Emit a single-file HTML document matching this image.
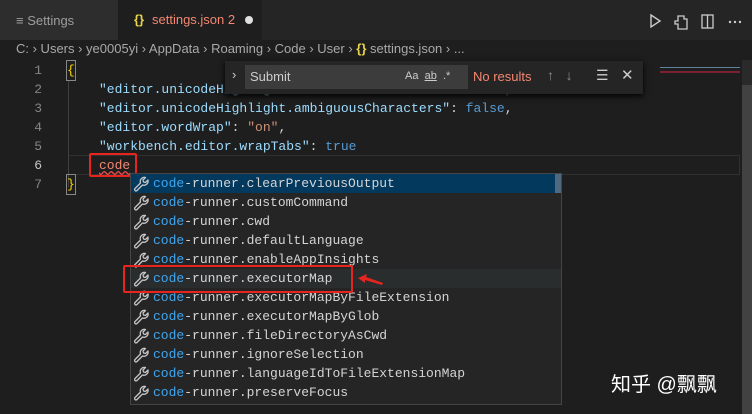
<!DOCTYPE html>
<html><head><meta charset="utf-8"><style>
*{margin:0;padding:0;box-sizing:border-box}
body{width:752px;height:414px;background:#1e1e1e;overflow:hidden;position:relative;font-family:"Liberation Sans","Noto Sans CJK SC",sans-serif;color:#ccc}
.abs{position:absolute}
.mono{font-family:"Liberation Mono",monospace;font-size:13px;white-space:pre}
.tabbar{left:0;top:0;width:752px;height:40px;background:#252526}
.ln{left:20px;width:22px;text-align:right;color:#858585}
.k{color:#9cdcfe}.s{color:#ce9178}.b{color:#569cd6}.p{color:#d4d4d4}
.row{position:absolute;left:0;width:430px;height:19px;line-height:19px}
.row .t{position:absolute;left:22px;color:#d4d4d4}
.row .t i{font-style:normal;color:#3ea6f0}
</style></head><body>
<div class="abs tabbar"></div>
<div class="abs" style="left:0;top:0;width:118px;height:40px;background:#2d2d2d"></div>
<div class="abs" style="left:16px;top:13px;font-size:13px;color:#9d9d9d">≡ Settings</div>
<div class="abs" style="left:118px;top:0;width:144px;height:40px;background:#1e1e1e"></div>
<div class="abs" style="left:134px;top:12px;font-size:13px;color:#e8d44d;font-weight:bold">{}</div>
<div class="abs" style="left:152px;top:12px;font-size:13px;color:#f48771">settings.json 2</div>
<div class="abs" style="left:245px;top:16px;width:8px;height:8px;border-radius:50%;background:#e0e0e0"></div>
<svg class="abs" style="left:640px;top:10px" width="110" height="22" viewBox="0 0 110 22">
<path d="M11 5 L20 11 L11 17 Z" fill="none" stroke="#ccc" stroke-width="1.4"/>
<path d="M38 6h6v3h3v10h-9v-5h-3v-3h3z" fill="none" stroke="#ccc" stroke-width="1.3"/>
<rect x="62" y="5" width="11" height="13" fill="none" stroke="#ccc" stroke-width="1.3"/><line x1="67.5" y1="5" x2="67.5" y2="18" stroke="#ccc" stroke-width="1.3"/>
<circle cx="90" cy="12" r="1.2" fill="#ccc"/><circle cx="95" cy="12" r="1.2" fill="#ccc"/><circle cx="100" cy="12" r="1.2" fill="#ccc"/>
</svg>
<div class="abs" style="left:16px;top:41px;font-size:13px;color:#a9a9a9;white-space:pre">C: › Users › ye0005yi › AppData › Roaming › Code › User › <b style="color:#e8d44d">{}</b> settings.json › ...</div>

<div class="abs" style="left:68px;top:155px;width:672px;height:20px;border:1px solid #303030"></div>
<div class="abs" style="left:68px;top:80px;width:1px;height:107px;background:#404040"></div>
<div class="abs mono" style="left:0;top:61px;line-height:19px">
<div class="abs ln" style="top:0">1</div><div class="abs ln" style="top:19px">2</div><div class="abs ln" style="top:38px">3</div><div class="abs ln" style="top:57px">4</div><div class="abs ln" style="top:76px">5</div><div class="abs ln" style="top:95px;color:#c6c6c6">6</div><div class="abs ln" style="top:114px">7</div>
<div class="abs" style="left:67px;top:0;color:#ffd700;outline:1px solid #888">{</div>
<div class="abs" style="left:99px;top:19px"><span class="k">"editor.unicodeHighlight.invisibleCharacters"</span><span class="p">: </span><span class="b">false</span><span class="p">,</span></div>
<div class="abs" style="left:99px;top:38px"><span class="k">"editor.unicodeHighlight.ambiguousCharacters"</span><span class="p">: </span><span class="b">false</span><span class="p">,</span></div>
<div class="abs" style="left:99px;top:57px"><span class="k">"editor.wordWrap"</span><span class="p">: </span><span class="s">"on"</span><span class="p">,</span></div>
<div class="abs" style="left:99px;top:76px"><span class="k">"workbench.editor.wrapTabs"</span><span class="p">: </span><span class="b">true</span></div>
<div class="abs" style="left:99px;top:95px;color:#f48771;text-decoration:underline wavy #f14c4c">code</div>
<div class="abs" style="left:67px;top:114px;color:#ffd700;outline:1px solid #888">}</div>
</div>
<div class="abs" style="left:89px;top:153px;width:48px;height:24px;border:2px solid #e8241f;border-radius:2px"></div>

<div class="abs" style="left:225px;top:61px;width:418px;height:33px;background:#252526;box-shadow:0 2px 6px #000"></div>
<div class="abs" style="left:232px;top:67px;font-size:13px;color:#ccc">›</div>
<div class="abs" style="left:245px;top:65px;width:223px;height:24px;background:#3c3c3c"></div>
<div class="abs" style="left:250px;top:69px;font-size:13px;color:#ccc">Submit</div>
<div class="abs" style="left:405px;top:70px;font-size:11px;color:#ccc;white-space:pre">Aa  <u>ab</u>  .*</div>
<div class="abs" style="left:473px;top:69px;font-size:13px;color:#f48771">No results</div>
<div class="abs" style="left:547px;top:67px;font-size:14px;color:#8a8a8a;white-space:pre">↑   ↓</div>
<div class="abs" style="left:596px;top:67px;font-size:14px;color:#ccc">☰</div>
<div class="abs" style="left:621px;top:66px;font-size:15px;color:#ccc">✕</div>

<div class="abs" style="left:742px;top:60px;width:10px;height:354px;background:#424242"></div>
<div class="abs" style="left:742px;top:60px;width:10px;height:25px;background:#2a2a2a"></div>
<div class="abs" style="left:660px;top:67px;width:80px;height:1px;background:#6080a0"></div>
<div class="abs" style="left:660px;top:71px;width:80px;height:2px;background:#7a2030"></div>

<div class="abs" style="left:130px;top:173px;width:432px;height:232px;background:#252526;border:1px solid #454545"></div>
<div class="abs" style="left:131px;top:174px;width:430px;height:19px;background:#04395e"></div>
<div class="abs" style="left:131px;top:269px;width:430px;height:19px;background:#2a2d2e"></div>
<div class="abs mono" style="left:131px;top:174px;width:430px">
<div class="row" style="top:0px"><span class="t"><i>code</i>-runner.clearPreviousOutput</span></div>
<div class="row" style="top:19px"><span class="t"><i>code</i>-runner.customCommand</span></div>
<div class="row" style="top:38px"><span class="t"><i>code</i>-runner.cwd</span></div>
<div class="row" style="top:57px"><span class="t"><i>code</i>-runner.defaultLanguage</span></div>
<div class="row" style="top:76px"><span class="t"><i>code</i>-runner.enableAppInsights</span></div>
<div class="row" style="top:95px"><span class="t"><i>code</i>-runner.executorMap</span></div>
<div class="row" style="top:114px"><span class="t"><i>code</i>-runner.executorMapByFileExtension</span></div>
<div class="row" style="top:133px"><span class="t"><i>code</i>-runner.executorMapByGlob</span></div>
<div class="row" style="top:152px"><span class="t"><i>code</i>-runner.fileDirectoryAsCwd</span></div>
<div class="row" style="top:171px"><span class="t"><i>code</i>-runner.ignoreSelection</span></div>
<div class="row" style="top:190px"><span class="t"><i>code</i>-runner.languageIdToFileExtensionMap</span></div>
<div class="row" style="top:209px"><span class="t"><i>code</i>-runner.preserveFocus</span></div>
</div>
<svg class="abs" style="left:131px;top:174px" width="22" height="230">
<defs><g id="wr" fill="none" stroke="#c5c5c5" stroke-width="1.3" stroke-linejoin="round">
<path d="M4 14.5 L9.5 9 A4.2 4.2 0 0 1 14.5 3.5 L12 6 L12.5 8 L14.5 8.5 L17 6 A4.2 4.2 0 0 1 11.5 11 L6 16.5 A1.4 1.4 0 0 1 4 14.5 Z"/></g></defs>
<use href="#wr" y="0"/><use href="#wr" y="19"/><use href="#wr" y="38"/><use href="#wr" y="57"/><use href="#wr" y="76"/><use href="#wr" y="95"/><use href="#wr" y="114"/><use href="#wr" y="133"/><use href="#wr" y="152"/><use href="#wr" y="171"/><use href="#wr" y="190"/><use href="#wr" y="209"/>
</svg>
<div class="abs" style="left:555px;top:174px;width:6px;height:19px;background:#4f6a80"></div>
<div class="abs" style="left:123px;top:265px;width:230px;height:28px;border:2px solid #e8241f;border-radius:2px"></div>
<svg class="abs" style="left:356px;top:270px" width="30" height="20"><path d="M2 8 L11 4 L10 7 L27 13 L26 15 L9 10 L9 13 Z" fill="#e8241f"/></svg>
<div class="abs" style="left:611px;top:368px;font-size:20px;color:#fff;white-space:pre">知乎 @飘飘</div>
</body></html>
